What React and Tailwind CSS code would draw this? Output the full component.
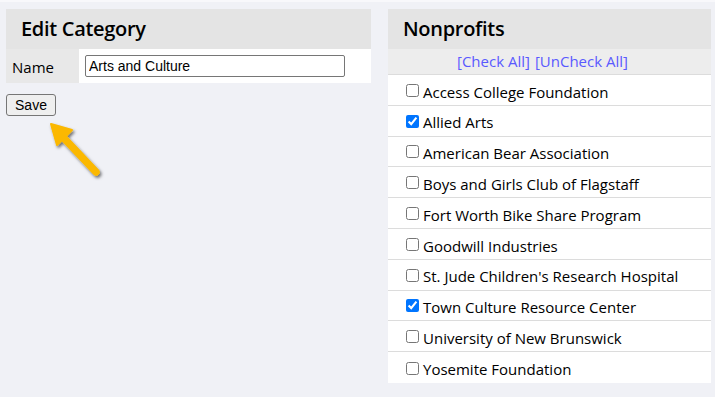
import React from "react";

const items = [
  ["Access College Foundation", false],
  ["Allied Arts", true],
  ["American Bear Association", false],
  ["Boys and Girls Club of Flagstaff", false],
  ["Fort Worth Bike Share Program", false],
  ["Goodwill Industries", false],
  ["St. Jude Children's Research Hospital", false],
  ["Town Culture Resource Center", true],
  ["University of New Brunswick", false],
  ["Yosemite Foundation", false],
];

const font = { fontFamily: '"Open Sans", "Noto Sans", sans-serif' };

export default function App() {
  return (
    <div className="w-[715px] h-[397px] bg-[#f0f1f6] border-t-2 border-[#f8f8fb] flex items-start gap-[17px] pl-[6px] pt-[7px] text-black" style={font}>
      <div className="w-[365px] flex flex-col relative">
        <div className="bg-[#e4e4e4] h-[40px] flex items-center pl-[15px] text-[20px] font-semibold tracking-[-0.3px]">Edit Category</div>
        <div className="flex h-[34px]">
          <div className="bg-[#e8e8e8] w-[73px] flex items-center pl-[6px] pt-[2px] text-[15px]">Name</div>
          <div className="bg-white flex-1 flex items-center pl-[6px]">
            <input
              readOnly
              defaultValue="Arts and Culture"
              className="w-[260px] h-[22px] border border-[#767676] rounded-[2px] px-[3px] text-[14px] text-black outline-none"
              style={{ fontFamily: '"Liberation Sans", Arial, sans-serif' }}
            />
          </div>
        </div>
        <div className="mt-[9px]">
          <button
            className="h-[22px] w-[50px] bg-[#efefef] border border-[#767676] rounded-[3px] text-[14px] text-black"
            style={{ fontFamily: '"Liberation Sans", Arial, sans-serif' }}
          >
            Save
          </button>
        </div>
        <svg className="absolute left-[33px] top-[103px]" width="72" height="72" viewBox="0 0 72 72">
          <defs>
            <filter id="sh" x="-30%" y="-30%" width="160%" height="160%">
              <feDropShadow dx="1.5" dy="2" stdDeviation="1.5" floodColor="#000" floodOpacity="0.55" />
            </filter>
          </defs>
          <g filter="url(#sh)">
            <line x1="57" y1="60" x2="21" y2="22" stroke="#fbb800" strokeWidth="7.5" strokeLinecap="round" />
            <polygon points="12,12 33,18 18,33" fill="#fbb800" stroke="#fbb800" strokeWidth="2" strokeLinejoin="round" />
          </g>
        </svg>
      </div>
      <div className="w-[323px] flex flex-col">
        <div className="bg-[#e4e4e4] h-[40px] flex items-center pl-[15px] text-[20px] font-semibold tracking-[-0.3px]">Nonprofits</div>
        <div className="bg-[#ededed] h-[26px] flex items-center justify-center pr-[14px] text-[15px] text-[#5a5aff] gap-[5px] border-b border-[#dcdcdc]">
          <span>[Check All]</span>
          <span>[UnCheck All]</span>
        </div>
        {items.map(([name, checked], i) => (
          <div key={name} className={`bg-white h-[30.8px] flex items-center pl-[18px] text-[15px] ${i < items.length - 1 ? "border-b border-[#dcdcdc]" : ""}`}>
            <input type="checkbox" defaultChecked={checked} className="w-[13px] h-[13px] m-0 mr-[4px] mt-[1px] accent-[#0075ff]" />
            <span className="pt-[4px]">{name}</span>
          </div>
        ))}
      </div>
    </div>
  );
}
